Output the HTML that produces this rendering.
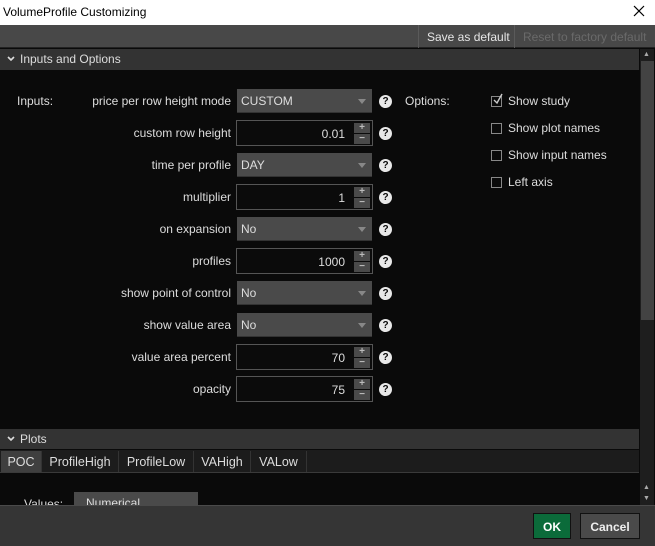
<!DOCTYPE html>
<html><head><style>
*{margin:0;padding:0;box-sizing:border-box}
body{width:655px;height:546px;overflow:hidden;background:#0a0a0a;font-family:"Liberation Sans",sans-serif;font-size:12px;color:#ddd;position:relative}
.a{position:absolute}
.lbl{position:absolute;right:424px;text-align:right;white-space:nowrap;color:#ddd}
.dd{position:absolute;left:237px;width:135px;height:24px;background:#4a4a4a;color:#ddd;padding:5px 0 0 4px;border-bottom:1px solid #333}
.dd:after{content:"";position:absolute;right:6px;top:10px;border:4px solid transparent;border-top:5px solid #888}
.sp{position:absolute;left:236px;width:137px;height:26px;border:1px solid #555;background:#0b0b0b;text-align:right;padding:6px 27px 0 0;color:#ddd}
.sp i,.sp b{position:absolute;right:2px;width:16px;height:10px;background:#4a4a4a;color:#bbb;font-style:normal;font-weight:bold;font-size:10px;line-height:10px;text-align:center}
.sp i{top:2px}.sp b{top:13px}
.q{position:absolute;left:379px;width:13px;height:13px;border-radius:50%;background:#e8e8e8;color:#0a0a0a;font-weight:bold;font-size:10px;line-height:13px;text-align:center}
.cb{position:absolute;left:491px;width:11px;height:11px;border:1px solid #888;background:#0a0a0a}
.ct{position:absolute;left:508px;color:#ddd}
.tab{position:absolute;top:451px;height:21px;padding:4px 0 0 0;text-align:center;color:#ddd;border-right:1px solid #333;font-size:12.5px}
</style></head><body>
<div class="a" style="left:0;top:0;width:655px;height:25px;background:#fff;color:#000;padding:5px 0 0 3px;font-size:12px">VolumeProfile Customizing</div>
<svg class="a" style="left:633px;top:5px" width="12" height="12"><path d="M1 1L11 11M11 1L1 11" stroke="#000" stroke-width="1.2"/></svg>
<div class="a" style="left:0;top:25px;width:655px;height:23px;background:#484848;border-bottom:1px solid #222"></div>
<div class="a" style="left:418px;top:25px;width:1px;height:23px;background:#5a5a5a"></div>
<div class="a" style="left:427px;top:30px;color:#e6e6e6">Save as default</div>
<div class="a" style="left:514px;top:25px;width:1px;height:23px;background:#5a5a5a"></div>
<div class="a" style="left:523px;top:30px;color:#6a6a6a">Reset to factory default</div>
<div class="a" style="left:0;top:49px;width:639px;height:21px;background:#333"></div>
<svg class="a" style="left:7px;top:56px" width="8" height="6"><path d="M1 1L4 4L7 1" stroke="#ddd" stroke-width="1.6" fill="none"/></svg>
<div class="a" style="left:20px;top:52px;color:#ddd">Inputs and Options</div>
<div class="a" style="left:640px;top:49px;width:14px;height:456px;background:#1e1e1e"></div>
<div class="a" style="left:641px;top:61px;width:13px;height:259px;background:#434343"></div>
<div class="a" style="left:643px;top:51px;color:#aaa;font-size:7px">▲</div>
<div class="a" style="left:643px;top:484px;color:#aaa;font-size:7px">▲</div>
<div class="a" style="left:643px;top:495px;color:#aaa;font-size:7px">▼</div>

<div class="a" style="left:17px;top:94px">Inputs:</div>
<div class="lbl" style="top:94px">price per row height mode</div><div class="dd" style="top:89px">CUSTOM</div><div class="q" style="top:95px">?</div>
<div class="lbl" style="top:126px">custom row height</div><div class="sp" style="top:120px">0.01<i>+</i><b>−</b></div><div class="q" style="top:127px">?</div>
<div class="lbl" style="top:158px">time per profile</div><div class="dd" style="top:153px">DAY</div><div class="q" style="top:159px">?</div>
<div class="lbl" style="top:190px">multiplier</div><div class="sp" style="top:184px">1<i>+</i><b>−</b></div><div class="q" style="top:191px">?</div>
<div class="lbl" style="top:222px">on expansion</div><div class="dd" style="top:217px">No</div><div class="q" style="top:223px">?</div>
<div class="lbl" style="top:254px">profiles</div><div class="sp" style="top:248px">1000<i>+</i><b>−</b></div><div class="q" style="top:255px">?</div>
<div class="lbl" style="top:286px">show point of control</div><div class="dd" style="top:281px">No</div><div class="q" style="top:287px">?</div>
<div class="lbl" style="top:318px">show value area</div><div class="dd" style="top:313px">No</div><div class="q" style="top:319px">?</div>
<div class="lbl" style="top:350px">value area percent</div><div class="sp" style="top:344px">70<i>+</i><b>−</b></div><div class="q" style="top:351px">?</div>
<div class="lbl" style="top:382px">opacity</div><div class="sp" style="top:376px">75<i>+</i><b>−</b></div><div class="q" style="top:383px">?</div>

<div class="a" style="left:405px;top:94px">Options:</div>
<div class="cb" style="top:96px"></div><svg class="a" style="left:493px;top:93px" width="11" height="12"><path d="M1 7L4 10L9 1" stroke="#ccc" stroke-width="1.4" fill="none"/></svg><div class="ct" style="top:94px">Show study</div>
<div class="cb" style="top:123px"></div><div class="ct" style="top:121px">Show plot names</div>
<div class="cb" style="top:150px"></div><div class="ct" style="top:148px">Show input names</div>
<div class="cb" style="top:177px"></div><div class="ct" style="top:175px">Left axis</div>

<div class="a" style="left:0;top:429px;width:639px;height:20px;background:#333"></div>
<svg class="a" style="left:7px;top:436px" width="8" height="6"><path d="M1 1L4 4L7 1" stroke="#ddd" stroke-width="1.6" fill="none"/></svg>
<div class="a" style="left:20px;top:432px">Plots</div>
<div class="a" style="left:0;top:450px;width:639px;height:23px;background:#1c1c1c;border-bottom:1px solid #3a3a3a"></div>
<div class="tab" style="left:1px;width:41px;background:#3f3f3f">POC</div>
<div class="tab" style="left:42px;width:77px">ProfileHigh</div>
<div class="tab" style="left:119px;width:75px">ProfileLow</div>
<div class="tab" style="left:194px;width:57px">VAHigh</div>
<div class="tab" style="left:251px;width:56px">VALow</div>
<div class="a" style="left:24px;top:497px;color:#ddd">Values:</div>
<div class="a" style="left:74px;top:492px;width:124px;height:14px;background:#4a4a4a;padding:4px 0 0 12px;color:#ddd;overflow:hidden">Numerical</div>

<div class="a" style="left:0;top:505px;width:655px;height:41px;background:#353535;border-top:1px solid #4a4a4a"></div>
<div class="a" style="left:533px;top:513px;width:38px;height:26px;background:#0b6b3a;border:1px solid #111;color:#fff;font-weight:bold;text-align:center;padding-top:6px">OK</div>
<div class="a" style="left:580px;top:513px;width:60px;height:26px;background:#4a4a4a;border:1px solid #111;color:#eee;font-weight:bold;text-align:center;padding-top:6px">Cancel</div>
</body></html>
